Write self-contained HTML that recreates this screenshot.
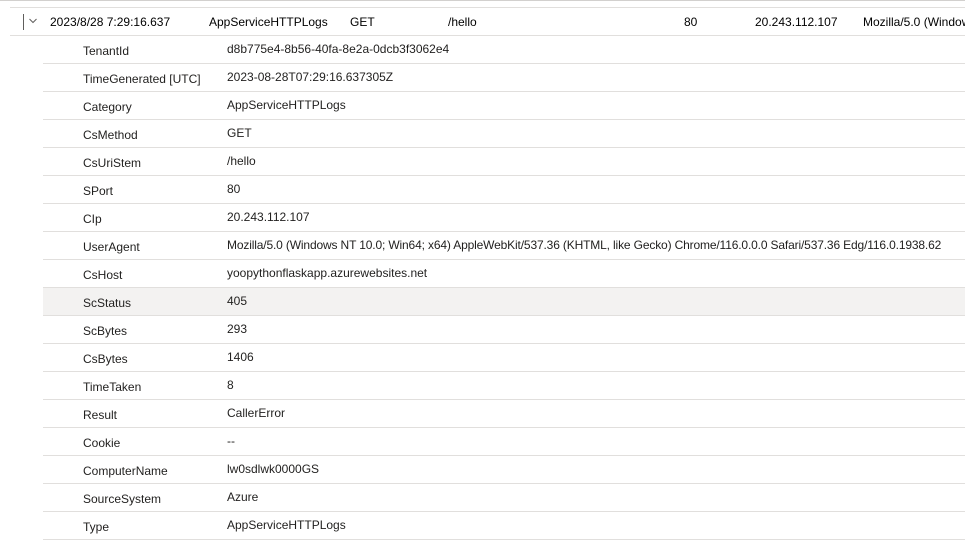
<!DOCTYPE html>
<html><head><meta charset="utf-8"><style>
html,body{margin:0;padding:0;background:#fff;width:965px;height:540px;overflow:hidden;font-family:"Liberation Sans",sans-serif;font-size:12px;color:#201f1e}
#wrap{position:relative;width:965px;height:540px;overflow:hidden}
.abs{position:absolute;white-space:nowrap}
.hd{color:#000}
.line{position:absolute;height:1px;background:#e1dfdd}
.row{position:absolute;left:43px;width:922px;height:28px;border-bottom:1px solid #e1dfdd;box-sizing:border-box;overflow:hidden}
.row .l{position:absolute;left:40px;top:8px;white-space:nowrap}
.row .v{position:absolute;left:184px;top:6px;white-space:nowrap}
</style></head><body><div id="wrap">
<div class="line" style="top:0;left:0;width:965px;background:#d2d0ce"></div>
<div class="line" style="top:7px;left:10px;width:955px"></div>
<div class="abs" style="left:23px;top:14px;width:1px;height:16px;background:#605e5c"></div>
<svg class="abs" style="left:29px;top:18px" width="8" height="6" viewBox="0 0 8 6"><path d="M0.5 1 L4 4.5 L7.5 1" fill="none" stroke="#605e5c" stroke-width="1"/></svg>
<div class="abs hd" style="left:50px;top:15px">2023/8/28 7:29:16.637</div>
<div class="abs hd" style="left:209px;top:15px">AppServiceHTTPLogs</div>
<div class="abs hd" style="left:350px;top:15px">GET</div>
<div class="abs hd" style="left:448px;top:15px">/hello</div>
<div class="abs hd" style="left:684px;top:15px">80</div>
<div class="abs hd" style="left:755px;top:15px">20.243.112.107</div>
<div class="abs hd" style="left:863px;top:15px;width:102px;overflow:hidden">Mozilla/5.0 (Windows NT 10.0; Win64; x64)</div>
<div class="line" style="top:35px;left:10px;width:955px"></div>
<div class="row" style="top:36px"><span class="l">TenantId</span><span class="v">d8b775e4-8b56-40fa-8e2a-0dcb3f3062e4</span></div>
<div class="row" style="top:64px"><span class="l">TimeGenerated [UTC]</span><span class="v">2023-08-28T07:29:16.637305Z</span></div>
<div class="row" style="top:92px"><span class="l">Category</span><span class="v">AppServiceHTTPLogs</span></div>
<div class="row" style="top:120px"><span class="l">CsMethod</span><span class="v">GET</span></div>
<div class="row" style="top:148px"><span class="l">CsUriStem</span><span class="v">/hello</span></div>
<div class="row" style="top:176px"><span class="l">SPort</span><span class="v">80</span></div>
<div class="row" style="top:204px"><span class="l">CIp</span><span class="v">20.243.112.107</span></div>
<div class="row" style="top:232px"><span class="l">UserAgent</span><span class="v" style="letter-spacing:-0.15px">Mozilla/5.0 (Windows NT 10.0; Win64; x64) AppleWebKit/537.36 (KHTML, like Gecko) Chrome/116.0.0.0 Safari/537.36 Edg/116.0.1938.62</span></div>
<div class="row" style="top:260px"><span class="l">CsHost</span><span class="v">yoopythonflaskapp.azurewebsites.net</span></div>
<div class="row" style="top:288px;background:#f3f2f1"><span class="l">ScStatus</span><span class="v">405</span></div>
<div class="row" style="top:316px"><span class="l">ScBytes</span><span class="v">293</span></div>
<div class="row" style="top:344px"><span class="l">CsBytes</span><span class="v">1406</span></div>
<div class="row" style="top:372px"><span class="l">TimeTaken</span><span class="v">8</span></div>
<div class="row" style="top:400px"><span class="l">Result</span><span class="v">CallerError</span></div>
<div class="row" style="top:428px"><span class="l">Cookie</span><span class="v">--</span></div>
<div class="row" style="top:456px"><span class="l">ComputerName</span><span class="v">lw0sdlwk0000GS</span></div>
<div class="row" style="top:484px"><span class="l">SourceSystem</span><span class="v">Azure</span></div>
<div class="row" style="top:512px"><span class="l">Type</span><span class="v">AppServiceHTTPLogs</span></div>
</div></body></html>
